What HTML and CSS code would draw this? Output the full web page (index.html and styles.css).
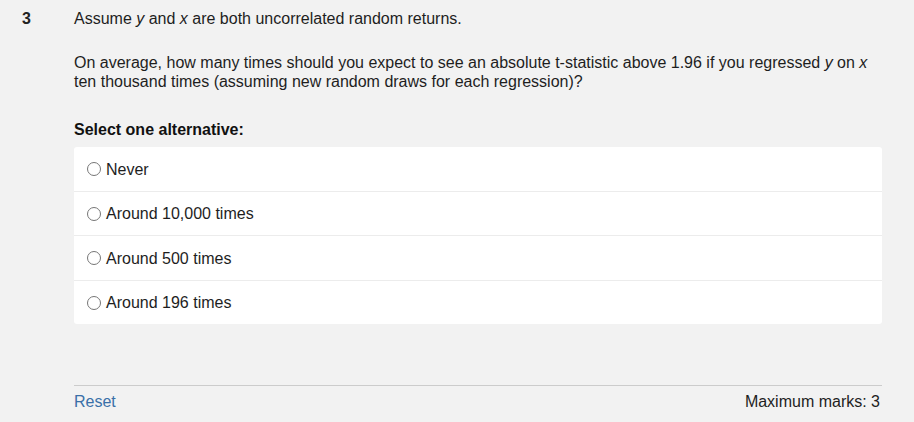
FILE: index.html
```html
<!DOCTYPE html>
<html lang="en">
<head>
<meta charset="utf-8">
<title>Question 3</title>
<link rel="stylesheet" href="styles.css">
</head>
<body>
<div class="question">
  <div class="qnum">3</div>
  <div class="qbody">
    <p class="p1">Assume <i>y</i> and <i>x</i> are both uncorrelated random returns.</p>
    <p class="p2">On average, how many times should you expect to see an absolute t-statistic above 1.96 if you regressed <i>y</i> on <i>x</i> ten thousand times (assuming new random draws for each regression)?</p>
    <div class="label">Select one alternative:</div>
    <div class="card">
      <label class="opt"><input type="radio" name="a"><span>Never</span></label>
      <label class="opt"><input type="radio" name="a"><span>Around 10,000 times</span></label>
      <label class="opt"><input type="radio" name="a"><span>Around 500 times</span></label>
      <label class="opt"><input type="radio" name="a"><span>Around 196 times</span></label>
    </div>
    <div class="footer">
      <a class="reset" href="#">Reset</a>
      <span class="marks">Maximum marks: 3</span>
    </div>
  </div>
</div>
</body>
</html>
```
FILE: styles.css
```css
html, body {
  margin: 0;
  padding: 0;
  background: #f2f2f2;
}
body {
  font-family: "Liberation Sans", Arial, sans-serif;
  font-size: 16px;
  line-height: 19px;
  color: #1e1e1e;
}
.question {
  display: grid;
  grid-template-columns: 74px 808px;
  padding-top: 9px;
}
.qnum {
  font-weight: bold;
  padding-left: 22px;
  color: #222;
}
.qbody p {
  margin: 0;
}
.p2 {
  margin-top: 25px !important;
}
.label {
  margin-top: 29px;
  font-weight: bold;
  color: #111;
}
.card {
  margin-top: 8px;
  background: #fff;
  border-radius: 3px;
  display: flex;
  flex-direction: column;
}
.opt {
  display: flex;
  align-items: center;
  padding: 12.5px 0 12px 13px;
  border-top: 1px solid #ececec;
  cursor: pointer;
}
.opt:first-child {
  border-top: none;
}
.opt input {
  margin: 0 5px 0 0;
  width: 14px;
  height: 14px;
}
.footer {
  margin-top: 61px;
  border-top: 1px solid #cccccc;
  display: flex;
  justify-content: space-between;
  padding-top: 6px;
}
.reset {
  color: #3a70a8;
  text-decoration: none;
}
.marks {
  padding-right: 2px;
  color: #1e1e1e;
}
```
